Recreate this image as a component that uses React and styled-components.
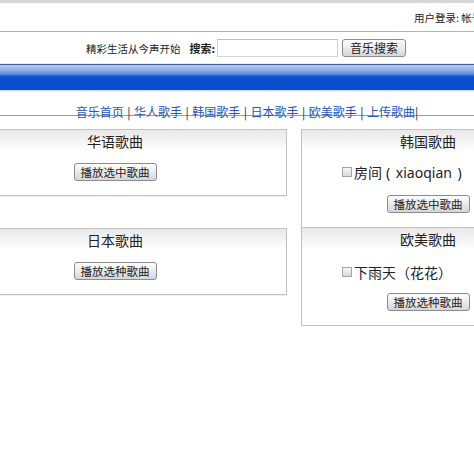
import React from "react";
import styled, { createGlobalStyle } from "styled-components";

const Global = createGlobalStyle`
  html, body {
    margin: 0;
    padding: 0;
    overflow: hidden;
    background: #ffffff;
  }
  body {
    font-family: "Noto Sans CJK SC", "Noto Sans", sans-serif;
    color: #222;
  }
`;

const Page = styled.div`
  width: 612px;
  margin-left: -57px;
`;

const TopStrip = styled.div`
  height: 3px;
  background: #d6d6d6;
`;

const Header = styled.div`
  height: 29px;
  display: flex;
  align-items: center;
  padding-left: 471px;
  border-bottom: 1px solid #b4b4b4;
  box-sizing: border-box;
  font-size: 10.5px;
  color: #222;
  white-space: nowrap;
`;

const SearchRow = styled.div`
  height: 31px;
  display: flex;
  align-items: center;
  justify-content: center;
  padding-right: 6px;
  padding-top: 1px;
  box-sizing: border-box;
  font-size: 10.5px;
`;

const Slogan = styled.span`
  margin-right: 9px;
  color: #222;
`;

const SearchLabel = styled.span`
  font-weight: bold;
  font-size: 11px;
  margin-right: 2px;
`;

const SearchInput = styled.input`
  width: 121px;
  height: 18px;
  box-sizing: border-box;
  border: 1px solid #d4d4d4;
  border-top-color: #c0c0c0;
  background: #fff;
  padding: 0 3px;
  margin: 0 4px 0 0;
  outline: none;
`;

const Button = styled.button`
  height: 18px;
  box-sizing: border-box;
  padding: 0 ${(p) => p.$pad || 6}px;
  border: 1px solid #8c8c8c;
  border-radius: 3px;
  background: linear-gradient(#fdfdfd, #e9e9e9 55%, #d6d6d6);
  font-family: "Noto Sans CJK SC", sans-serif;
  font-size: ${(p) => p.$size || 11.5}px;
  line-height: 16px;
  color: #222;
  margin: 0;
  cursor: pointer;
  white-space: nowrap;
`;

const BlueBar = styled.div`
  height: 29px;
  background: linear-gradient(
    to bottom,
    #e4edf9 0px,
    #e4edf9 1px,
    #3d5d96 1px,
    #3d5d96 2px,
    #b6ccef 2px,
    #8fb2e8 7px,
    #5e8ede 11px,
    #1d5bd2 13px,
    #0a4ecd 14px,
    #0a4ecd 27px,
    #cbd9f0 27px,
    #eef3fb 29px
  );
`;

const Nav = styled.nav`
  height: 24px;
  box-sizing: border-box;
  border-bottom: 1px solid #9a9a9a;
  display: flex;
  align-items: flex-end;
  justify-content: center;
  padding-right: 4px;
`;

const NavInner = styled.div`
  line-height: 16px;
  margin-bottom: -5px;
  font-size: 12px;
  white-space: nowrap;
`;

const NavLink = styled.a`
  color: #2556b8;
  text-decoration: none;
`;

const Sep = styled.span`
  color: #1e2a44;
  margin: 0 ${(p) => (p.$last ? 0 : 3.5)}px;
`;

const Main = styled.div`
  margin-top: 13px;
  display: grid;
  grid-template-columns: 344px 254px;
  column-gap: 14px;
  align-items: start;
`;

const Column = styled.div`
  display: flex;
  flex-direction: column;
  gap: ${(p) => p.$gap || 0}px;
`;

const Panel = styled.section`
  border: 1px solid #c2c2c2;
  border-top: ${(p) => (p.$noTop ? "none" : "1px solid #c2c2c2")};
  background: #fff;
  box-shadow: 0 1px 1px rgba(0, 0, 0, 0.06);
`;

const PanelTitle = styled.div`
  height: 22px;
  line-height: 22px;
  text-align: center;
  font-size: 14px;
  color: #222;
  background: linear-gradient(to bottom, #e8e8e8, #f6f6f6 60%, #ffffff);
`;

const PanelBody = styled.div`
  display: flex;
  flex-direction: column;
  align-items: center;
  padding: 0 0 14px;
`;

const CheckRow = styled.label`
  align-self: stretch;
  display: flex;
  align-items: center;
  height: 20px;
  margin-top: ${(p) => p.$mt}px;
  padding-left: 40px;
  font-size: 14px;
  color: #222;
  white-space: nowrap;
`;

const CheckText = styled.span`
  white-space: pre;
`;

const Check = styled.input`
  appearance: none;
  -webkit-appearance: none;
  width: 10px;
  height: 10px;
  margin: 0 2px 0 0;
  border: 1px solid #a4a4a4;
  background: linear-gradient(#f6f6f6, #d9d9d9);
  box-sizing: border-box;
`;

const Latin = styled.span`
  font-family: "Noto Sans", sans-serif;
  font-size: 14px;
  word-spacing: 2px;
  margin-left: 4px;
`;

const ButtonWrap = styled.div`
  margin-top: ${(p) => p.$mt}px;
  display: flex;
`;

const navItems = ["音乐首页", "华人歌手", "韩国歌手", "日本歌手", "欧美歌手", "上传歌曲"];

export default function App() {
  return (
    <>
      <Global />
      <Page>
        <TopStrip />
        <Header>用户登录: 帐号</Header>
        <SearchRow>
          <Slogan>精彩生活从今声开始</Slogan>
          <SearchLabel>搜索:</SearchLabel>
          <SearchInput type="text" />
          <Button $pad={7} $size={12}>音乐搜索</Button>
        </SearchRow>
        <BlueBar />
        <Nav>
          <NavInner>
            {navItems.map((t, i) => (
              <React.Fragment key={t}>
                <NavLink href="#">{t}</NavLink>
                <Sep $last={i === navItems.length - 1}>|</Sep>
              </React.Fragment>
            ))}
          </NavInner>
        </Nav>
        <Main>
          <Column $gap={32}>
            <Panel>
              <PanelTitle>华语歌曲</PanelTitle>
              <PanelBody>
                <ButtonWrap $mt={11}>
                  <Button>播放选中歌曲</Button>
                </ButtonWrap>
              </PanelBody>
            </Panel>
            <Panel>
              <PanelTitle>日本歌曲</PanelTitle>
              <PanelBody>
                <ButtonWrap $mt={11}>
                  <Button>播放选种歌曲</Button>
                </ButtonWrap>
              </PanelBody>
            </Panel>
          </Column>
          <Column>
            <Panel>
              <PanelTitle>韩国歌曲</PanelTitle>
              <PanelBody>
                <CheckRow $mt={10}>
                  <Check type="checkbox" />
                  <CheckText>
                    房间
                    <Latin>{"( xiaoqian )"}</Latin>
                  </CheckText>
                </CheckRow>
                <ButtonWrap $mt={13}>
                  <Button>播放选中歌曲</Button>
                </ButtonWrap>
              </PanelBody>
            </Panel>
            <Panel $noTop>
              <PanelTitle>欧美歌曲</PanelTitle>
              <PanelBody>
                <CheckRow $mt={12}>
                  <Check type="checkbox" />
                  <CheckText>下雨天（花花）</CheckText>
                </CheckRow>
                <ButtonWrap $mt={11}>
                  <Button>播放选种歌曲</Button>
                </ButtonWrap>
              </PanelBody>
            </Panel>
          </Column>
        </Main>
      </Page>
    </>
  );
}
